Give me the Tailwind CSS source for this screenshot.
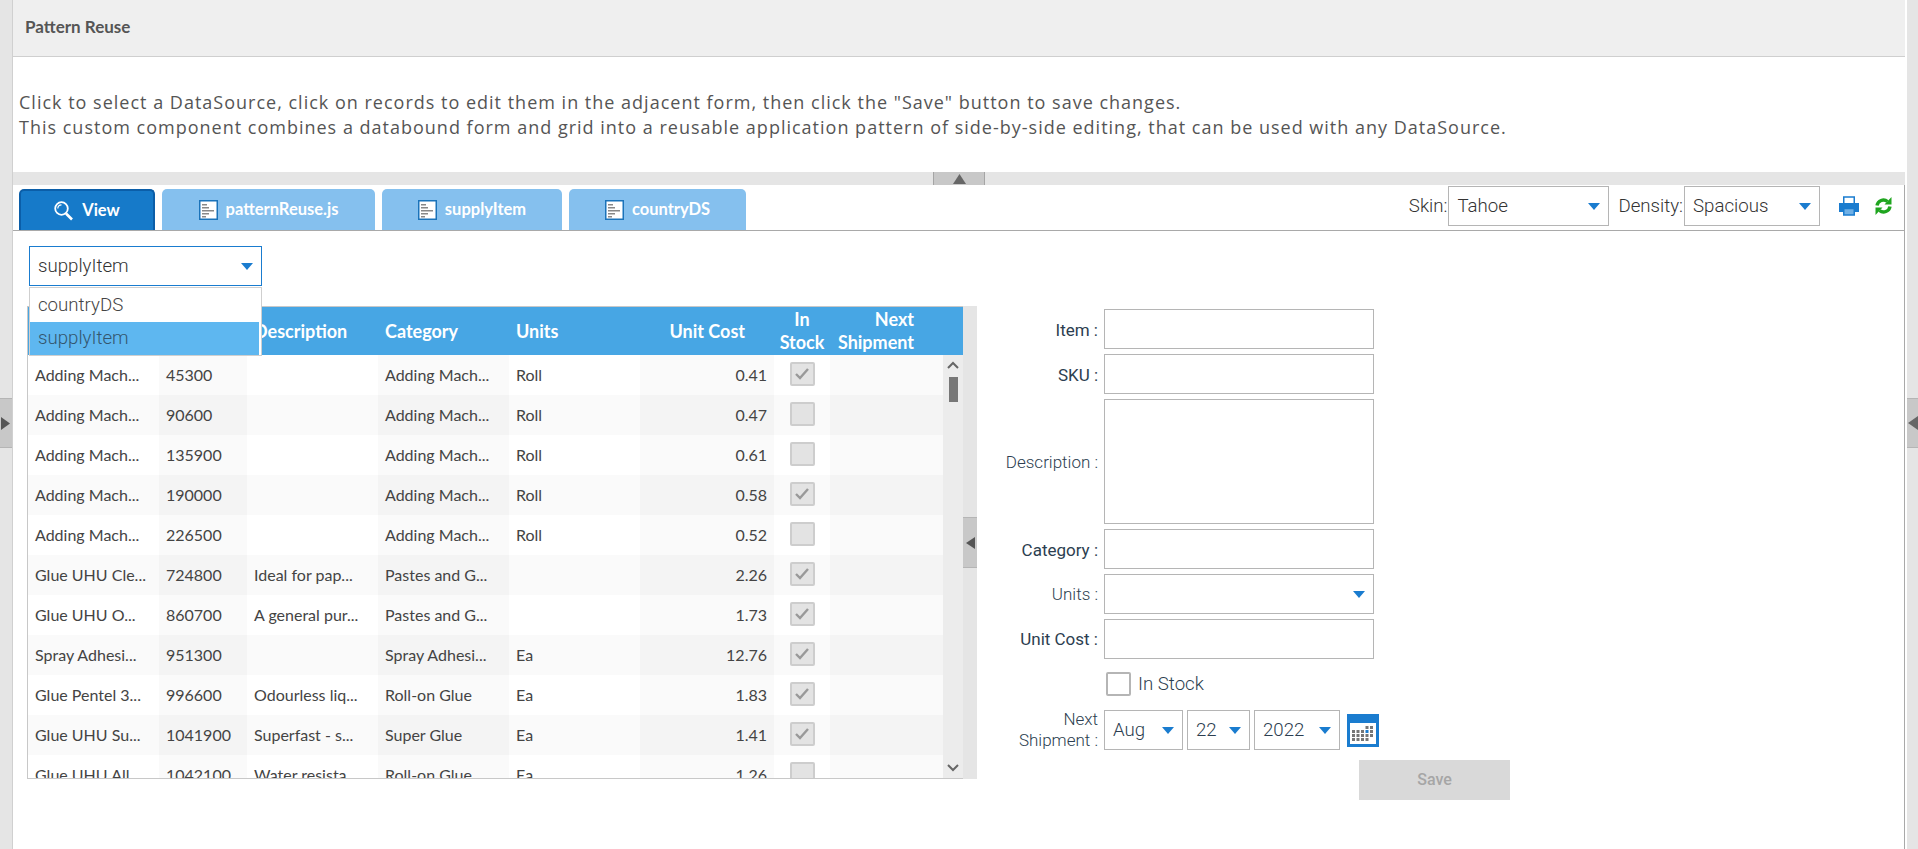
<!doctype html>
<html>
<head>
<meta charset="utf-8">
<title>Pattern Reuse</title>
<script src="https://cdn.jsdelivr.net/npm/@tailwindcss/browser@4"></script>
</head>
<body class="bg-white overflow-hidden">
<div class="flex w-[1918px] h-[849px] overflow-hidden">

  <!-- left collapse strip -->
  <div class="w-[13px] shrink-0 bg-[#e5e5e5] border-r border-[#d0d0d0] pt-[398px]">
    <div class="h-[50px] bg-[#c8c8c8] border-y border-[#b5b5b5] flex items-center pl-[1px]">
      <svg width="9" height="13" viewBox="0 0 9 13"><path d="M0 0l9 6.5-9 6.5z" fill="#555"/></svg>
    </div>
  </div>

  <div class="w-[1892px] shrink-0 flex flex-col">
    <div class="h-[57px] shrink-0 bg-[#efefef] border-b border-[#cfcfcf] flex items-center pl-[12px] pb-[2px] text-[17px] font-bold text-[#555] font-['Lato',sans-serif]">Pattern Reuse</div>

    <div class="h-[115px] shrink-0 flex flex-col justify-center pl-[6px] text-[18px] leading-[25px] tracking-[1px] text-[#555] font-['Open_Sans',sans-serif]">
      <p>Click to select a DataSource, click on records to edit them in the adjacent form, then click the "Save" button to save changes.</p>
      <p>This custom component combines a databound form and grid into a reusable application pattern of side-by-side editing, that can be used with any DataSource.</p>
    </div>

    <div class="h-[13px] shrink-0 bg-[#e5e5e5] flex justify-center">
      <div class="w-[52px] h-[13px] bg-[#c8c8c8] border-x border-[#a5a5a5] flex items-center justify-center">
        <svg width="13" height="10" viewBox="0 0 13 10"><path d="M0 10L6.500 0 13 10z" fill="#666"/></svg>
      </div>
    </div>

    <!-- tabs + toolbar -->
    <div class="h-[46px] shrink-0 flex items-end pl-[6px] pr-[11px] border-b border-r border-[#a9a9a9] font-['Lato',sans-serif]">
      <div class="flex gap-[7px] h-[41px]">
        <div class="w-[136px] bg-[#167ac9] border-t-2 border-x-2 border-[#0b5ea8] rounded-t-[5px] flex items-center justify-center gap-[8px] text-white text-[16.5px] font-bold">
          <svg width="20" height="20" viewBox="0 0 20 20" fill="none" stroke="#fff"><circle cx="7.500" cy="7.500" r="6.300" stroke-width="1.800"/><path d="M12 12.500l6 6" stroke-width="2.600"/><path d="M3.800 7.500a3.800 3.800 0 0 1 3.700-3.700" stroke-width="1.200"/></svg>
          View
        </div>
        <div class="w-[213px] bg-[#85c0ee] rounded-t-[5px] flex items-center justify-center gap-[8px] text-white text-[16.5px] font-bold">
          <svg width="19" height="20" viewBox="0 0 19 20"><rect x=".75" y=".75" width="17.500" height="18.500" fill="#fff" stroke="#1a73ba" stroke-width="1.500"/><path d="M3 4h5v1.500H3zM3 7h7v1.500H3zM3 10h12v1.500H3zM3 13h7v1.500H3zM3 16h4v1.500H3z" fill="#888"/></svg>
          patternReuse.js
        </div>
        <div class="w-[180px] bg-[#85c0ee] rounded-t-[5px] flex items-center justify-center gap-[8px] text-white text-[16.5px] font-bold">
          <svg width="19" height="20" viewBox="0 0 19 20"><rect x=".75" y=".75" width="17.500" height="18.500" fill="#fff" stroke="#1a73ba" stroke-width="1.500"/><path d="M3 4h5v1.500H3zM3 7h7v1.500H3zM3 10h12v1.500H3zM3 13h7v1.500H3zM3 16h4v1.500H3z" fill="#888"/></svg>
          supplyItem
        </div>
        <div class="w-[177px] bg-[#85c0ee] rounded-t-[5px] flex items-center justify-center gap-[8px] text-white text-[16.5px] font-bold">
          <svg width="19" height="20" viewBox="0 0 19 20"><rect x=".75" y=".75" width="17.500" height="18.500" fill="#fff" stroke="#1a73ba" stroke-width="1.500"/><path d="M3 4h5v1.500H3zM3 7h7v1.500H3zM3 10h12v1.500H3zM3 13h7v1.500H3zM3 16h4v1.500H3z" fill="#888"/></svg>
          countryDS
        </div>
      </div>
      <div class="ml-auto self-start mt-[1px] flex items-center h-[40px] font-['Roboto',sans-serif] font-light text-[18.67px] text-[#333]">
        <span class="mr-[1px]">Skin:</span>
        <div class="w-[161px] h-[40px] border border-[#b5b5b5] flex items-center justify-between pl-[8px] pr-[8px]"><span>Tahoe</span><svg width="12" height="7" viewBox="0 0 12 7"><path d="M0 0h12L6 7z" fill="#1a7ccf"/></svg></div>
        <span class="ml-[9px] mr-[1px]">Density:</span>
        <div class="w-[136px] h-[40px] border border-[#b5b5b5] flex items-center justify-between pl-[8px] pr-[8px]"><span>Spacious</span><svg width="12" height="7" viewBox="0 0 12 7"><path d="M0 0h12L6 7z" fill="#1a7ccf"/></svg></div>
        <svg class="ml-[19px]" width="20" height="20" viewBox="0 0 20 20"><rect x="4.750" y="1" width="10.500" height="8" fill="#fff" stroke="#1a7ccf" stroke-width="1.500"/><path d="M0 7h20v9h-4v-3H4v3H0z" fill="#1a7ccf"/><rect x="4.750" y="12.500" width="10.500" height="6.500" fill="#6fb0e6" stroke="#1a7ccf" stroke-width="1.500"/></svg>
        <svg class="ml-[15px]" width="19" height="20" viewBox="0 0 19 20" fill="none" stroke="#1fa51f" stroke-width="3.400"><path d="M3 9.500a6.500 6.500 0 0 1 10.500-4"/><path d="M16 10.500a6.500 6.500 0 0 1-10.500 4"/><path d="M10.500 8.500h7V1z" fill="#1fa51f" stroke="none"/><path d="M8.500 11.500h-7V19z" fill="#1fa51f" stroke="none"/></svg>
      </div>
    </div>

    <!-- view pane -->
    <div class="relative flex-1 border-r border-[#a9a9a9] pl-[14px] pt-[15px]">
      <div class="relative ml-[2px] w-[233px] h-[40px] border border-[#1a7ccf] flex items-center justify-between pl-[8px] pr-[8px] font-['Roboto',sans-serif] font-light text-[18.67px] text-[#333]">
        <span>supplyItem</span>
        <svg width="12" height="7" viewBox="0 0 12 7"><path d="M0 0h12L6 7z" fill="#1a7ccf"/></svg>
      </div>

      <div class="flex mt-[20px]">
        <!-- grid -->
        <div class="w-[936px] shrink-0 h-[473px] border-l border-t border-b border-[#c8c8c8] overflow-hidden font-['Lato',sans-serif] text-[16px] text-[#444] flex flex-col">
          <div class="h-[48px] shrink-0 bg-[#47a6e4] text-white text-[18px] font-bold grid grid-cols-[131px_88px_131px_131px_131px_134px_56px_134px] items-center leading-[23px]">
            <div class="pl-[7px]">Item</div>
            <div class="pl-[7px]">SKU</div>
            <div class="pl-[7px]">Description</div>
            <div class="pl-[7px]">Category</div>
            <div class="pl-[7px]">Units</div>
            <div class="text-right pr-[29px]">Unit Cost</div>
            <div class="text-center whitespace-nowrap">In<br>Stock</div>
            <div class="text-right pr-[50px] whitespace-nowrap">Next<br>Shipment</div>
          </div>
          <div class="flex-1 flex min-h-0">
            <div class="w-[915px] shrink-0 overflow-hidden">
              <div class="h-[40px] grid grid-cols-[131px_88px_131px_131px_131px_134px_56px_113px] bg-white">
                <div class="pl-[7px] leading-[40px] whitespace-nowrap">Adding Mach...</div><div class="pl-[7px] leading-[40px] bg-[#fafafa]">45300</div><div></div><div class="pl-[7px] leading-[40px] whitespace-nowrap bg-[#fafafa]">Adding Mach...</div><div class="pl-[7px] leading-[40px]">Roll</div><div class="text-right pr-[7px] leading-[40px] bg-[#fafafa]">0.41</div>
                <div class="pl-[16px] pt-[7px]"><div class="w-[25px] h-[24px] bg-[#e3e3e3] border-2 border-[#cdcdcd] rounded-[2px] flex items-center justify-center"><svg width="15" height="12" viewBox="0 0 15 12" fill="none" stroke="#999" stroke-width="2.400"><path d="M1 6l4 4 8-9"/></svg></div></div><div class="bg-[#fafafa]"></div>
              </div>
              <div class="h-[40px] grid grid-cols-[131px_88px_131px_131px_131px_134px_56px_113px] bg-[#fafafa]">
                <div class="pl-[7px] leading-[40px] whitespace-nowrap">Adding Mach...</div><div class="pl-[7px] leading-[40px] bg-[#f4f4f4]">90600</div><div></div><div class="pl-[7px] leading-[40px] whitespace-nowrap bg-[#f4f4f4]">Adding Mach...</div><div class="pl-[7px] leading-[40px]">Roll</div><div class="text-right pr-[7px] leading-[40px] bg-[#f4f4f4]">0.47</div>
                <div class="pl-[16px] pt-[7px]"><div class="w-[25px] h-[24px] bg-[#e3e3e3] border-2 border-[#cdcdcd] rounded-[2px]"></div></div><div class="bg-[#f4f4f4]"></div>
              </div>
              <div class="h-[40px] grid grid-cols-[131px_88px_131px_131px_131px_134px_56px_113px] bg-white">
                <div class="pl-[7px] leading-[40px] whitespace-nowrap">Adding Mach...</div><div class="pl-[7px] leading-[40px] bg-[#fafafa]">135900</div><div></div><div class="pl-[7px] leading-[40px] whitespace-nowrap bg-[#fafafa]">Adding Mach...</div><div class="pl-[7px] leading-[40px]">Roll</div><div class="text-right pr-[7px] leading-[40px] bg-[#fafafa]">0.61</div>
                <div class="pl-[16px] pt-[7px]"><div class="w-[25px] h-[24px] bg-[#e3e3e3] border-2 border-[#cdcdcd] rounded-[2px]"></div></div><div class="bg-[#fafafa]"></div>
              </div>
              <div class="h-[40px] grid grid-cols-[131px_88px_131px_131px_131px_134px_56px_113px] bg-[#fafafa]">
                <div class="pl-[7px] leading-[40px] whitespace-nowrap">Adding Mach...</div><div class="pl-[7px] leading-[40px] bg-[#f4f4f4]">190000</div><div></div><div class="pl-[7px] leading-[40px] whitespace-nowrap bg-[#f4f4f4]">Adding Mach...</div><div class="pl-[7px] leading-[40px]">Roll</div><div class="text-right pr-[7px] leading-[40px] bg-[#f4f4f4]">0.58</div>
                <div class="pl-[16px] pt-[7px]"><div class="w-[25px] h-[24px] bg-[#e3e3e3] border-2 border-[#cdcdcd] rounded-[2px] flex items-center justify-center"><svg width="15" height="12" viewBox="0 0 15 12" fill="none" stroke="#999" stroke-width="2.400"><path d="M1 6l4 4 8-9"/></svg></div></div><div class="bg-[#f4f4f4]"></div>
              </div>
              <div class="h-[40px] grid grid-cols-[131px_88px_131px_131px_131px_134px_56px_113px] bg-white">
                <div class="pl-[7px] leading-[40px] whitespace-nowrap">Adding Mach...</div><div class="pl-[7px] leading-[40px] bg-[#fafafa]">226500</div><div></div><div class="pl-[7px] leading-[40px] whitespace-nowrap bg-[#fafafa]">Adding Mach...</div><div class="pl-[7px] leading-[40px]">Roll</div><div class="text-right pr-[7px] leading-[40px] bg-[#fafafa]">0.52</div>
                <div class="pl-[16px] pt-[7px]"><div class="w-[25px] h-[24px] bg-[#e3e3e3] border-2 border-[#cdcdcd] rounded-[2px]"></div></div><div class="bg-[#fafafa]"></div>
              </div>
              <div class="h-[40px] grid grid-cols-[131px_88px_131px_131px_131px_134px_56px_113px] bg-[#fafafa]">
                <div class="pl-[7px] leading-[40px] whitespace-nowrap">Glue UHU Cle...</div><div class="pl-[7px] leading-[40px] bg-[#f4f4f4]">724800</div><div class="pl-[7px] leading-[40px] whitespace-nowrap">Ideal for pap...</div><div class="pl-[7px] leading-[40px] whitespace-nowrap bg-[#f4f4f4]">Pastes and G...</div><div></div><div class="text-right pr-[7px] leading-[40px] bg-[#f4f4f4]">2.26</div>
                <div class="pl-[16px] pt-[7px]"><div class="w-[25px] h-[24px] bg-[#e3e3e3] border-2 border-[#cdcdcd] rounded-[2px] flex items-center justify-center"><svg width="15" height="12" viewBox="0 0 15 12" fill="none" stroke="#999" stroke-width="2.400"><path d="M1 6l4 4 8-9"/></svg></div></div><div class="bg-[#f4f4f4]"></div>
              </div>
              <div class="h-[40px] grid grid-cols-[131px_88px_131px_131px_131px_134px_56px_113px] bg-white">
                <div class="pl-[7px] leading-[40px] whitespace-nowrap">Glue UHU O...</div><div class="pl-[7px] leading-[40px] bg-[#fafafa]">860700</div><div class="pl-[7px] leading-[40px] whitespace-nowrap">A general pur...</div><div class="pl-[7px] leading-[40px] whitespace-nowrap bg-[#fafafa]">Pastes and G...</div><div></div><div class="text-right pr-[7px] leading-[40px] bg-[#fafafa]">1.73</div>
                <div class="pl-[16px] pt-[7px]"><div class="w-[25px] h-[24px] bg-[#e3e3e3] border-2 border-[#cdcdcd] rounded-[2px] flex items-center justify-center"><svg width="15" height="12" viewBox="0 0 15 12" fill="none" stroke="#999" stroke-width="2.400"><path d="M1 6l4 4 8-9"/></svg></div></div><div class="bg-[#fafafa]"></div>
              </div>
              <div class="h-[40px] grid grid-cols-[131px_88px_131px_131px_131px_134px_56px_113px] bg-[#fafafa]">
                <div class="pl-[7px] leading-[40px] whitespace-nowrap">Spray Adhesi...</div><div class="pl-[7px] leading-[40px] bg-[#f4f4f4]">951300</div><div></div><div class="pl-[7px] leading-[40px] whitespace-nowrap bg-[#f4f4f4]">Spray Adhesi...</div><div class="pl-[7px] leading-[40px]">Ea</div><div class="text-right pr-[7px] leading-[40px] bg-[#f4f4f4]">12.76</div>
                <div class="pl-[16px] pt-[7px]"><div class="w-[25px] h-[24px] bg-[#e3e3e3] border-2 border-[#cdcdcd] rounded-[2px] flex items-center justify-center"><svg width="15" height="12" viewBox="0 0 15 12" fill="none" stroke="#999" stroke-width="2.400"><path d="M1 6l4 4 8-9"/></svg></div></div><div class="bg-[#f4f4f4]"></div>
              </div>
              <div class="h-[40px] grid grid-cols-[131px_88px_131px_131px_131px_134px_56px_113px] bg-white">
                <div class="pl-[7px] leading-[40px] whitespace-nowrap">Glue Pentel 3...</div><div class="pl-[7px] leading-[40px] bg-[#fafafa]">996600</div><div class="pl-[7px] leading-[40px] whitespace-nowrap">Odourless liq...</div><div class="pl-[7px] leading-[40px] whitespace-nowrap bg-[#fafafa]">Roll-on Glue</div><div class="pl-[7px] leading-[40px]">Ea</div><div class="text-right pr-[7px] leading-[40px] bg-[#fafafa]">1.83</div>
                <div class="pl-[16px] pt-[7px]"><div class="w-[25px] h-[24px] bg-[#e3e3e3] border-2 border-[#cdcdcd] rounded-[2px] flex items-center justify-center"><svg width="15" height="12" viewBox="0 0 15 12" fill="none" stroke="#999" stroke-width="2.400"><path d="M1 6l4 4 8-9"/></svg></div></div><div class="bg-[#fafafa]"></div>
              </div>
              <div class="h-[40px] grid grid-cols-[131px_88px_131px_131px_131px_134px_56px_113px] bg-[#fafafa]">
                <div class="pl-[7px] leading-[40px] whitespace-nowrap">Glue UHU Su...</div><div class="pl-[7px] leading-[40px] bg-[#f4f4f4]">1041900</div><div class="pl-[7px] leading-[40px] whitespace-nowrap">Superfast - s...</div><div class="pl-[7px] leading-[40px] whitespace-nowrap bg-[#f4f4f4]">Super Glue</div><div class="pl-[7px] leading-[40px]">Ea</div><div class="text-right pr-[7px] leading-[40px] bg-[#f4f4f4]">1.41</div>
                <div class="pl-[16px] pt-[7px]"><div class="w-[25px] h-[24px] bg-[#e3e3e3] border-2 border-[#cdcdcd] rounded-[2px] flex items-center justify-center"><svg width="15" height="12" viewBox="0 0 15 12" fill="none" stroke="#999" stroke-width="2.400"><path d="M1 6l4 4 8-9"/></svg></div></div><div class="bg-[#f4f4f4]"></div>
              </div>
              <div class="h-[40px] grid grid-cols-[131px_88px_131px_131px_131px_134px_56px_113px] bg-white">
                <div class="pl-[7px] leading-[40px] whitespace-nowrap">Glue UHU All...</div><div class="pl-[7px] leading-[40px] bg-[#fafafa]">1042100</div><div class="pl-[7px] leading-[40px] whitespace-nowrap">Water resista...</div><div class="pl-[7px] leading-[40px] whitespace-nowrap bg-[#fafafa]">Roll-on Glue</div><div class="pl-[7px] leading-[40px]">Ea</div><div class="text-right pr-[7px] leading-[40px] bg-[#fafafa]">1.26</div>
                <div class="pl-[16px] pt-[7px]"><div class="w-[25px] h-[24px] bg-[#e3e3e3] border-2 border-[#cdcdcd] rounded-[2px]"></div></div><div class="bg-[#fafafa]"></div>
              </div>
            </div>
            <!-- scrollbar -->
            <div class="w-[20px] shrink-0 bg-[#ececec] flex flex-col items-center justify-between py-[6px]">
              <div class="flex flex-col items-center">
                <svg width="12" height="8" viewBox="0 0 12 8" fill="none" stroke="#666" stroke-width="2"><path d="M1 7l5-5 5 5"/></svg>
                <div class="w-[9px] h-[25px] bg-[#777] mt-[8px]"></div>
              </div>
              <svg width="12" height="8" viewBox="0 0 12 8" fill="none" stroke="#666" stroke-width="2"><path d="M1 1l5 5 5-5"/></svg>
            </div>
          </div>
        </div>

        <!-- resize bar -->
        <div class="w-[14px] h-[473px] shrink-0 bg-[#e5e5e5] pt-[211px]">
          <div class="h-[51px] bg-[#c8c8c8] border-y border-[#b5b5b5] flex items-center justify-center">
            <svg width="9" height="12" viewBox="0 0 9 12"><path d="M9 0L0 6l9 6z" fill="#555"/></svg>
          </div>
        </div>

        <!-- form -->
        <div class="mt-[3px] flex flex-col font-['Roboto',sans-serif] text-[17px] text-[#2c3e50]">
          <div class="flex items-center h-[40px]"><label class="w-[121px] text-right mr-[6px] pt-[3px]">Item :</label><div class="w-[270px] h-[40px] border border-[#b5b5b5]"></div></div>
          <div class="flex items-center h-[40px] mt-[5px]"><label class="w-[121px] text-right mr-[6px] pt-[3px]">SKU :</label><div class="w-[270px] h-[40px] border border-[#b5b5b5]"></div></div>
          <div class="flex items-center h-[125px] mt-[5px]"><label class="w-[121px] text-right mr-[6px] pt-[2px] font-light">Description :</label><div class="w-[270px] h-[125px] border border-[#b5b5b5]"></div></div>
          <div class="flex items-center h-[40px] mt-[5px]"><label class="w-[121px] text-right mr-[6px] pt-[3px]">Category :</label><div class="w-[270px] h-[40px] border border-[#b5b5b5]"></div></div>
          <div class="flex items-center h-[40px] mt-[5px]"><label class="w-[121px] text-right mr-[6px] pt-[2px] font-light">Units :</label><div class="w-[270px] h-[40px] border border-[#b5b5b5] flex items-center justify-end pr-[8px]"><svg width="12" height="7" viewBox="0 0 12 7"><path d="M0 0h12L6 7z" fill="#1a7ccf"/></svg></div></div>
          <div class="flex items-center h-[40px] mt-[5px]"><label class="w-[121px] text-right mr-[6px] pt-[2px]">Unit Cost :</label><div class="w-[270px] h-[40px] border border-[#b5b5b5]"></div></div>
          <div class="flex items-center h-[24px] mt-[13px] pl-[129px] font-light text-[18.67px]">
            <div class="w-[25px] h-[24px] border-2 border-[#b5b5b5] rounded-[2px] mr-[7px]"></div>In Stock
          </div>
          <div class="flex items-center h-[40px] mt-[14px] font-light">
            <label class="w-[121px] text-right mr-[6px] leading-[21px]">Next<br>Shipment :</label>
            <div class="w-[79px] h-[40px] border border-[#b5b5b5] flex items-center justify-between pl-[8px] pr-[8px] text-[18.67px]"><span>Aug</span><svg width="12" height="7" viewBox="0 0 12 7"><path d="M0 0h12L6 7z" fill="#1a7ccf"/></svg></div>
            <div class="ml-[4px] w-[63px] h-[40px] border border-[#b5b5b5] flex items-center justify-between pl-[8px] pr-[8px] text-[18.67px]"><span>22</span><svg width="12" height="7" viewBox="0 0 12 7"><path d="M0 0h12L6 7z" fill="#1a7ccf"/></svg></div>
            <div class="ml-[4px] w-[86px] h-[40px] border border-[#b5b5b5] flex items-center justify-between pl-[8px] pr-[8px] text-[18.67px]"><span>2022</span><svg width="12" height="7" viewBox="0 0 12 7"><path d="M0 0h12L6 7z" fill="#1a7ccf"/></svg></div>
            <svg class="ml-[7px]" width="32" height="33" viewBox="0 0 32 33"><rect width="32" height="33" fill="#1a7ccf"/><rect x="3" y="9" width="26" height="21" fill="#fff"/><path d="M18.500 12h3v3h-3zM23 12h3v3h-3zM5 16h3v3H5zM9.500 16h3v3h-3zM14 16h3v3h-3zM23 16h3v3h-3zM5 20h3v3H5zM9.500 20h3v3h-3zM14 20h3v3h-3zM18.500 20h3v3h-3zM23 20h3v3h-3zM5 24h3v3H5zM9.500 24h3v3h-3zM14 24h3v3h-3zM18.500 24h3v3h-3z" fill="#777"/><path d="M18.500 16h3v3h-3z" fill="#1a7ccf"/></svg>
          </div>
          <div class="self-end mt-[10px] -mr-[131px] w-[151px] h-[40px] bg-[#d9d9d9] text-[#a6a6a6] font-medium flex items-center justify-center text-[16px]">Save</div>
        </div>
      </div>

      <!-- open dropdown -->
      <div class="absolute left-[16px] top-[56px] w-[233px] h-[69px] border border-[#cfcfcf] bg-white font-['Roboto',sans-serif] font-light text-[18.67px] text-[#444]">
        <div class="h-[34px] pl-[8px] leading-[34px] mr-[2px]">countryDS</div>
        <div class="h-[33px] pl-[8px] leading-[33px] mr-[2px] bg-[#5eb7f0] text-[#34566e]">supplyItem</div>
      </div>
    </div>
  </div>

  <!-- right collapse strip -->
  <div class="w-[2px] shrink-0"></div>
  <div class="w-[11px] shrink-0 bg-[#e5e5e5] pt-[398px]">
    <div class="h-[50px] bg-[#c8c8c8] border-y border-[#b5b5b5] flex items-center justify-end">
      <svg width="10" height="14" viewBox="0 0 10 14"><path d="M10 0L0 7l10 7z" fill="#666"/></svg>
    </div>
  </div>
</div>
</body>
</html>
